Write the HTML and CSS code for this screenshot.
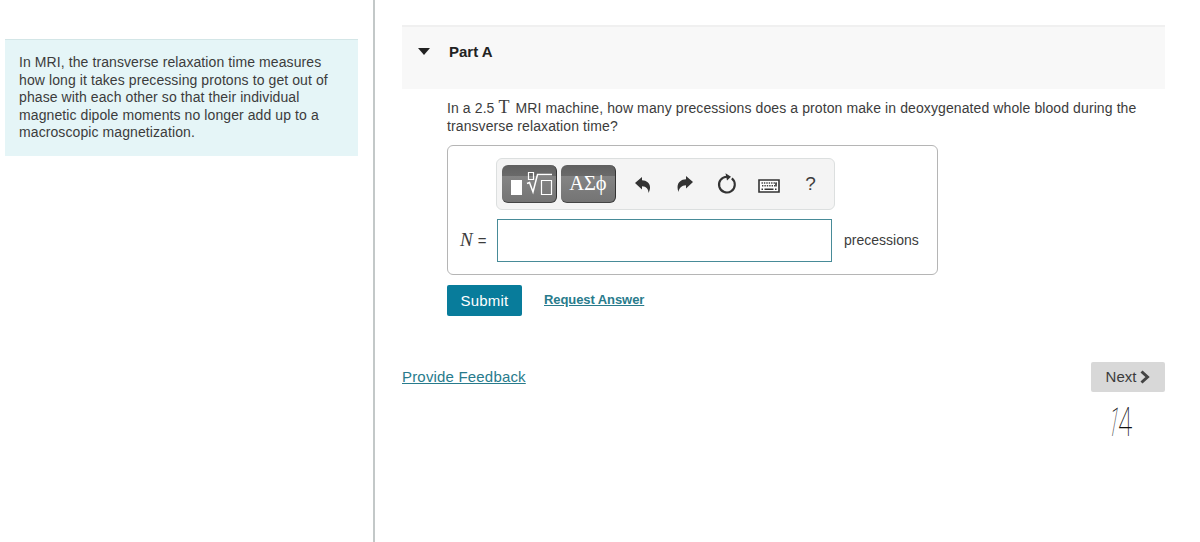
FILE: index.html
```html
<!DOCTYPE html>
<html lang="en">
<head>
    <meta charset="UTF-8">
    <meta name="viewport" content="width=device-width, initial-scale=1.0">
    <title>Part A</title>
    <link rel="stylesheet" href="styles.css">
</head>
<body>
    <aside>
        <p class="intro">In MRI, the transverse relaxation time measures<br>how long it takes precessing protons to get out of<br>phase with each other so that their individual<br>magnetic dipole moments no longer add up to a<br>macroscopic magnetization.</p>
    </aside>
    <main>
        <header>
            <svg class="arrow" width="12" height="7" viewBox="0 0 12 7"><path d="M0 0H12L6 7Z" fill="#222"/></svg>
            <h1>Part A</h1>
        </header>
        <section>
            <p class="question">In a 2.5 <span class="unit">T</span> MRI machine, how many precessions does a proton make in deoxygenated whole blood during the<br>transverse relaxation time?</p>
            <div class="answer">
                <div class="toolbar">
                    <button class="dark" type="button" aria-label="Templates">
                        <svg width="54" height="37" viewBox="0 0 54 37">
                            <path d="M9 15H20V30H9Z" fill="#fff"/>
                            <path d="M26.5 7.5H31.5V14.5H26.5ZM39.5 15.5H49.5V29.5H39.5Z" fill="none" stroke="#fff" stroke-width="1.2"/>
                            <path d="M25 18.5L27.5 17.5L31 27L35.5 9.5H50" fill="none" stroke="#fff" stroke-width="1.5"/>
                        </svg>
                    </button>
                    <button class="dark greek" type="button">ΑΣϕ</button>
                    <button class="tool" type="button" aria-label="Undo">
                        <svg width="16" height="17" viewBox="0 0 16 17"><path d="M0 7L7 1V4.3C13 4.5 17.5 9 13.5 17C13.5 13 11.5 10.4 7 10.2V13.5Z" fill="#333"/></svg>
                    </button>
                    <button class="tool" type="button" aria-label="Redo">
                        <svg width="16" height="17" viewBox="0 0 16 17"><path d="M16 6L9 0V3.3C3 3.5 -1.5 8 1.5 16C2 12 4.5 9.4 9 9.2V12.5Z" fill="#333"/></svg>
                    </button>
                    <button class="tool" type="button" aria-label="Reset">
                        <svg width="20" height="22" viewBox="0 0 20 22"><path d="M14.8 5.4A7.9 7.9 0 1 1 10 3.7" fill="none" stroke="#333" stroke-width="2.1"/><path d="M8.5 0.3L14 3.7L10 7.5Z" fill="#333"/></svg>
                    </button>
                    <button class="tool keyboard" type="button" aria-label="Keyboard">
                        <svg width="22" height="14" viewBox="0 0 22 14"><path d="M1 1H21V13H1Z" fill="#fff" stroke="#333" stroke-width="1.6"/><path d="M3.5 4H18.5M4 6.8H17" stroke="#444" stroke-width="1.4" stroke-dasharray="1.4 1"/><path d="M3.5 10.2H5M6.5 10.2H15.5M17 10.2H18.5M18 3.5V7.5" stroke="#333" stroke-width="1.6"/></svg>
                    </button>
                    <button class="tool help" type="button">?</button>
                </div>
                <div class="row">
                    <label for="fans"><i>N</i> =</label>
                    <input type="text" id="fans" name="fans">
                    <span>precessions</span>
                </div>
            </div>
            <div class="actions">
                <button class="submit" type="button">Submit</button>
                <a class="request" href="#">Request Answer</a>
            </div>
        </section>
        <footer>
            <a class="feedback" href="#">Provide Feedback</a>
            <div class="pager">
                <button class="next" type="button">Next <svg width="10" height="14" viewBox="0 0 10 14"><path d="M1.5 1.5L7.5 7L1.5 12.5" fill="none" stroke="#444" stroke-width="3"/></svg></button>
                <p class="note"><span class="one">1</span><span class="four">4</span></p>
            </div>
        </footer>
    </main>
</body>
</html>
```
FILE: styles.css
```css
* {
    box-sizing: border-box;
}

body {
    margin: 0;
    height: 542px;
    display: flex;
    overflow: hidden;
    background: white;
    color: #3c3c3c;
    font-family: "Liberation Sans", Arial, Helvetica, sans-serif;
    font-size: 14px;
    line-height: 17.5px;
}

p, h1 {
    margin: 0;
}

button {
    padding: 0;
    border: none;
    background: none;
    font-family: inherit;
    color: inherit;
}

svg {
    display: block;
}

a {
    color: #287b8c;
}

aside {
    width: 375px;
    padding: 39px 15px 0 5px;
    border-right: 2px solid #c3c8c8;
}

.intro {
    height: 117px;
    padding: 14px 14px 0;
    background: #e5f5f7;
    border-top: 1px solid #d3e6e7;
    letter-spacing: 0.09px;
    white-space: nowrap;
}

main {
    width: 790px;
    padding: 25px 0 0 27px;
}

header {
    height: 64px;
    display: flex;
    padding: 16px 0 0 16px;
    background: #f8f8f8;
    border-top: 2px solid #f0f0f0;
}

.arrow {
    margin: 5px 19px 0 0;
}

h1 {
    font-size: 15px;
    color: #222;
}

section {
    padding: 9px 0 0 45px;
}

.question {
    letter-spacing: 0.1px;
    white-space: nowrap;
}

.unit {
    margin-right: 2px;
    font-family: "Liberation Serif", serif;
    font-size: 18px;
    line-height: 1;
}

.answer {
    width: 491px;
    height: 130px;
    margin-top: 10px;
    padding: 12px 0 0 49px;
    border: 1px solid #b5b5b5;
    border-radius: 6px;
}

.toolbar {
    width: 339px;
    height: 52px;
    display: flex;
    margin-left: -1px;
    padding: 6px 5px;
    background: #f4f4f4;
    border: 1px solid #dcdfdf;
    border-radius: 6px;
}

.dark {
    width: 55px;
    height: 38px;
    margin-right: 4px;
    border-radius: 6px;
    background: linear-gradient(#606060 0, #6a6a6a 30%, #848484 31%, #747474 100%);
    border-right: 1px solid #333;
    border-bottom: 1px solid #444;
    color: white;
}

.greek {
    font-family: "Liberation Serif", serif;
    font-size: 20.5px;
}

.tool {
    width: 42px;
    height: 38px;
    display: flex;
    align-items: center;
    justify-content: center;
    padding-left: 5px;
}

.keyboard {
    padding-top: 3px;
}

.help {
    font-size: 19px;
}

.row {
    display: flex;
    align-items: center;
    margin: 9px 0 0 -37px;
}

label {
    width: 37px;
    font-size: 15px;
    white-space: nowrap;
}

label i {
    margin-right: 1px;
    font-family: "Liberation Serif", serif;
    font-size: 19px;
}

input {
    width: 335px;
    height: 43px;
    margin-right: 12px;
    border: 1px solid #478b98;
    background: white;
}

.actions {
    display: flex;
    align-items: center;
    margin-top: 10px;
}

.submit {
    width: 75px;
    height: 31px;
    margin-right: 22px;
    border-radius: 2px;
    background: #087c9b;
    color: white;
    font-size: 15px;
    letter-spacing: 0.2px;
}

.request {
    margin-top: -2px;
    font-size: 13px;
    font-weight: bold;
    letter-spacing: -0.08px;
}

footer {
    display: flex;
    justify-content: space-between;
    margin-top: 46px;
}

.feedback {
    margin-top: 6px;
    font-size: 15px;
    letter-spacing: 0.18px;
}

.next {
    width: 74px;
    height: 30px;
    display: flex;
    align-items: center;
    justify-content: center;
    gap: 4px;
    padding-bottom: 1px;
    background: #d8d8d8;
    border-radius: 2px;
    font-size: 15px;
}

/* pen note under the button */
.note {
    display: flex;
    margin: 13px 0 0 18px;
    font-family: Roboto, sans-serif;
    font-size: 40px;
    font-weight: 100;
    line-height: 36px;
    color: #111;
}

.one {
    width: 9px;
    transform: scaleX(0.45) skewX(-22deg);
    transform-origin: left center;
}

.four {
    transform: scaleX(0.65);
    transform-origin: left center;
}
```
